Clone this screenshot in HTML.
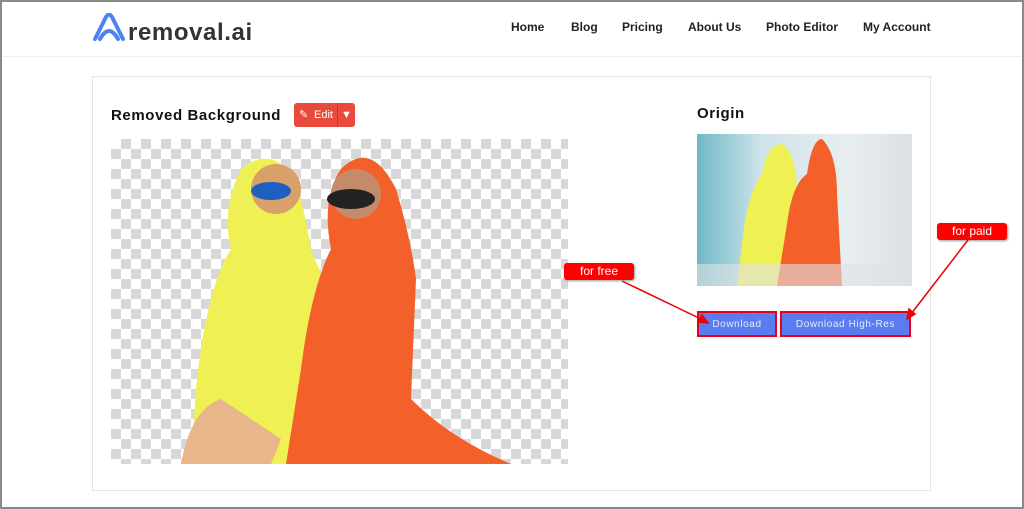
<!DOCTYPE html>
<html><head><style>
*{margin:0;padding:0;box-sizing:border-box}
body{width:1024px;height:509px;overflow:hidden;background:#fff;font-family:"Liberation Sans",sans-serif;position:relative}
.frame{position:absolute;left:0;top:0;width:1024px;height:509px;border:2px solid #8a8a8a}
.hdr{position:absolute;left:2px;right:2px;top:2px;height:55px;border-bottom:1px solid #eee}
.logo{position:absolute;left:128px;top:19px;font-size:24px;font-weight:bold;color:#333;letter-spacing:0.6px}
.nav{position:absolute;top:20px;font-size:12px;font-weight:bold;color:#222}
.card{position:absolute;left:92px;top:76px;width:839px;height:415px;border:1px solid #e5e5e5}
.t{position:absolute;font-weight:bold;font-size:15px;color:#111;letter-spacing:.6px}
.checker{position:absolute;left:111px;top:139px;width:457px;height:325px;
background-color:#fff;background-image:linear-gradient(45deg,#d8d8d8 25%,transparent 25%,transparent 75%,#d8d8d8 75%),linear-gradient(45deg,#d8d8d8 25%,transparent 25%,transparent 75%,#d8d8d8 75%);background-size:20px 20px;background-position:0 0,10px 10px}
.btn{position:absolute;top:311px;height:26px;background:#5b7cf0;border:2px solid #e8001a;color:#e4e9ff;font-size:10px;text-align:center;line-height:23px;letter-spacing:.6px}
.tag{position:absolute;background:#f00;color:#fff;font-size:12px;text-align:center;border-radius:3px;height:17px;line-height:17px;box-shadow:1px 1px 2px #999}
</style></head><body>
<div class="hdr"></div>
<svg style="position:absolute;left:92px;top:13px" width="34" height="30" viewBox="0 0 34 30"><path d="M3 26 L14 4 Q17 -1 20 4 L31 26 M8 26 Q17 10 26 26" fill="none" stroke="#4d82f3" stroke-width="4" stroke-linecap="round" stroke-linejoin="round"/></svg>
<div class="logo">removal.ai</div>
<div class="nav" style="left:511px">Home</div>
<div class="nav" style="left:571px">Blog</div>
<div class="nav" style="left:622px">Pricing</div>
<div class="nav" style="left:688px">About Us</div>
<div class="nav" style="left:766px">Photo Editor</div>
<div class="nav" style="left:863px">My Account</div>
<div class="card"></div>
<div class="t" style="left:111px;top:107px">Removed Background</div>
<div style="position:absolute;left:294px;top:103px;width:61px;height:24px;background:#e84a3c;border-radius:3px;color:#fff;font-size:11px;line-height:24px">
<span style="position:absolute;left:5px">✎</span><span style="position:absolute;left:20px">Edit</span><span style="position:absolute;left:43px;top:0;width:1px;height:24px;background:#c73a2e"></span><span style="position:absolute;left:47px">▼</span></div>
<div class="checker"></div>
<svg style="position:absolute;left:111px;top:139px" width="457" height="325">
<path d="M80 325 L85 250 Q95 150 120 110 Q110 70 130 30 Q160 5 185 40 Q195 80 200 110 Q215 150 230 170 L200 325 Z" fill="#eef053"/>
<path d="M175 325 L190 230 Q200 150 220 110 Q210 60 230 30 Q260 0 285 50 Q300 100 305 140 L300 260 Q340 300 400 325 Z" fill="#f4602a"/>
<circle cx="165" cy="50" r="25" fill="#d8a06a"/><circle cx="245" cy="55" r="25" fill="#c48a6a"/>
<ellipse cx="160" cy="52" rx="20" ry="9" fill="#1e5fc0"/><ellipse cx="240" cy="60" rx="24" ry="10" fill="#222"/>
<path d="M70 325 Q80 270 110 260 L170 300 L160 325Z" fill="#e9b58b"/>
</svg>
<div class="t" style="left:697px;top:105px">Origin</div>
<div style="position:absolute;left:697px;top:134px;width:215px;height:152px;background:linear-gradient(90deg,#6fb9c6 0%,#cfe3ea 30%,#e8eef0 70%,#dcdfe3 100%)">
<svg width="215" height="152"><path d="M40 152 L45 110 Q50 60 65 40 Q70 10 85 10 Q100 20 100 60 L110 152Z" fill="#eef053"/><path d="M80 152 L90 90 Q95 50 110 40 Q115 5 125 5 Q140 20 140 60 L145 152Z" fill="#f4602a"/><rect x="0" y="130" width="215" height="22" fill="#e0e3e4" opacity=".6"/></svg></div>
<div class="btn" style="left:697px;width:80px">Download</div>
<div class="btn" style="left:780px;width:131px">Download High-Res</div>
<div class="tag" style="left:564px;top:263px;width:70px">for free</div>
<div class="tag" style="left:937px;top:223px;width:70px">for paid</div>
<svg style="position:absolute;left:0;top:0" width="1024" height="509"><g stroke="#e00" stroke-width="1.5" fill="#e00">
<line x1="622" y1="281" x2="703" y2="320"/><path d="M708 323 L698 322 L702 315Z"/>
<line x1="968" y1="240" x2="911" y2="314"/><path d="M907 319 L909 309 L915 314Z"/></g></svg>
<div class="frame"></div>
</body></html>
